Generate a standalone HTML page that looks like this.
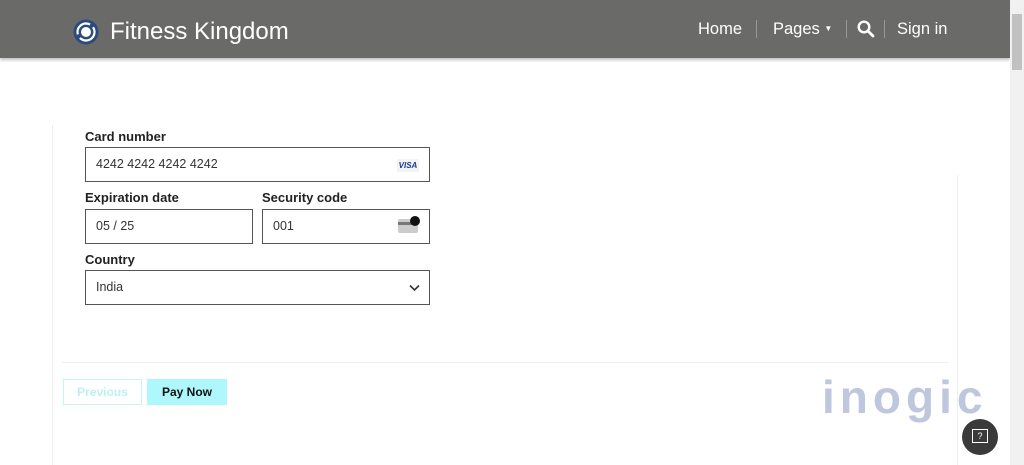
<!DOCTYPE html>
<html><head><style>
body{margin:0;width:1024px;height:465px;overflow:hidden;background:#fff;font-family:"Liberation Sans",sans-serif;position:relative}
.hdr{position:absolute;left:0;top:0;width:1010px;height:58px;background:#6a6a69;box-shadow:0 2px 3px rgba(0,0,0,.25)}
.sb{position:absolute;left:1010px;top:0;width:14px;height:465px;background:#f1f1f1}
.sb .th{position:absolute;left:2px;top:14px;width:10px;height:56px;background:#c1c1c1}
.t{position:absolute;color:#fff}
.lbl{position:absolute;font-family:"Liberation Sans",sans-serif;font-size:13px;font-weight:bold;color:#222}
.in{position:absolute;border:1px solid #555;box-sizing:border-box;height:35px;font-family:"Liberation Sans",sans-serif;font-size:12.5px;color:#333;padding:0 0 0 10px;line-height:33px}
.sep{position:absolute;top:20px;width:1px;height:18px;background:#999}
</style></head><body>
<div class="hdr">
<svg style="position:absolute;left:73px;top:19px" width="26" height="26" viewBox="0 0 26 26"><circle cx="13" cy="13" r="12.5" fill="#2c4a7a"/><circle cx="13" cy="13" r="8.5" fill="none" stroke="#fff" stroke-width="2.2" stroke-dasharray="20 4"/><circle cx="13" cy="13" r="5" fill="#fff"/></svg>
<div class="t" style="left:110px;top:18px;font-size:24px">Fitness Kingdom</div>
<div class="t" style="left:698px;top:20px;font-size:16.5px">Home</div>
<div class="sep" style="left:756px"></div>
<div class="t" style="left:773px;top:20px;font-size:16.5px">Pages <span style="font-size:8px;vertical-align:3px">▼</span></div>
<div class="sep" style="left:846px"></div>
<svg style="position:absolute;left:857px;top:20px" width="18" height="18" viewBox="0 0 18 18"><circle cx="7" cy="7" r="5.3" fill="none" stroke="#fff" stroke-width="2.4"/><path d="M11 11l5 5" stroke="#fff" stroke-width="2.8" stroke-linecap="round"/></svg>
<div class="sep" style="left:884px"></div>
<div class="t" style="left:897px;top:20px;font-size:16.5px">Sign in</div>
</div>
<div class="sb"><div class="th"></div></div>
<div style="position:absolute;left:52px;top:125px;width:1px;height:340px;background:#eee"></div>
<div style="position:absolute;left:957px;top:175px;width:1px;height:290px;background:#eee"></div>
<div style="position:absolute;left:62px;top:362px;width:886px;height:1px;background:#eee"></div>
<div class="lbl" style="left:85px;top:129px">Card number</div>
<div class="in" style="left:85px;top:147px;width:345px">4242 4242 4242 4242<span style="position:absolute;right:10px;top:11px;width:22px;height:13px;background:#f3f3f3;color:#1a3b9a;font-size:8px;font-weight:bold;line-height:13px;text-align:center;font-style:italic">VISA</span></div>
<div class="lbl" style="left:85px;top:190px">Expiration date</div>
<div class="in" style="left:85px;top:209px;width:168px">05 / 25</div>
<div class="lbl" style="left:262px;top:190px">Security code</div>
<div class="in" style="left:262px;top:209px;width:168px">001<span style="position:absolute;right:11px;top:9px;width:20px;height:14px;background:#ccc;border-radius:2px"></span><span style="position:absolute;right:11px;top:12px;width:20px;height:3px;background:#777"></span><span style="position:absolute;right:9px;top:6px;width:10px;height:10px;background:#111;border-radius:50%"></span></div>
<div class="lbl" style="left:85px;top:252px">Country</div>
<div class="in" style="left:85px;top:270px;width:345px">India<svg style="position:absolute;right:9px;top:13px" width="11" height="8" viewBox="0 0 11 8"><path d="M1 1.5l4.5 4.5 4.5-4.5" fill="none" stroke="#333" stroke-width="1.6"/></svg></div>
<div style="position:absolute;left:63px;top:379px;width:79px;height:26px;border:1px solid #c8f4f8;box-sizing:border-box;color:#bdf0f5;font-size:12px;font-weight:bold;text-align:center;line-height:24px">Previous</div>
<div style="position:absolute;left:147px;top:379px;width:80px;height:26px;background:#aef7fc;color:#111;font-size:12px;font-weight:bold;text-align:center;line-height:26px">Pay Now</div>
<div style="position:absolute;left:822px;top:370px;font-size:46px;font-weight:bold;color:#bfc7de;letter-spacing:5px">inogic</div>
<div style="position:absolute;left:962px;top:419px;width:36px;height:36px;border-radius:50%;background:#3a3a3a"><div style="position:absolute;left:10px;top:10px;width:14px;height:12px;border:1.5px solid #fff;color:#fff;font-size:9px;text-align:center;line-height:12px">?</div></div>
</body></html>
